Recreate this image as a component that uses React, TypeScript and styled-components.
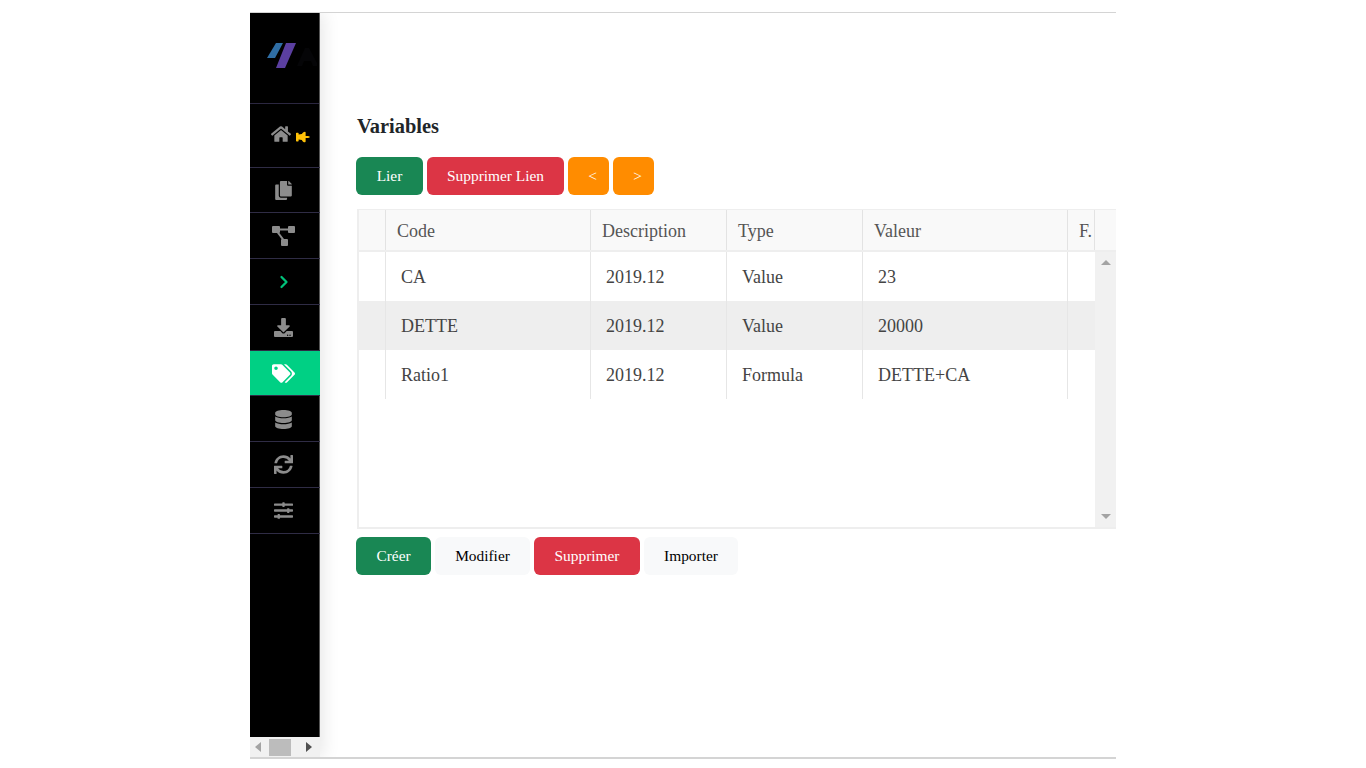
import React from "react"
import styled, { createGlobalStyle } from "styled-components"
import { FaHome, FaThumbtack, FaCopy, FaDownload, FaTags, FaDatabase, FaSlidersH, FaSync } from "react-icons/fa"
import { LuChevronRight } from "react-icons/lu"

const GlobalStyle = createGlobalStyle`
  html, body {
    margin: 0;
    padding: 0;
    background: #fff;
    font-family: "Liberation Serif", "Times New Roman", serif;
  }
`

const Page = styled.div`
  width: 1366px;
  height: 768px;
  overflow: hidden;
  display: flex;
  justify-content: center;
  padding-top: 12px;
  box-sizing: border-box;
`

const Frame = styled.div`
  width: 866px;
  height: 747px;
  box-sizing: border-box;
  border-top: 1px solid #d4d4d4;
  border-bottom: 2px solid #d4d4d4;
  display: flex;
  overflow: hidden;
`

const SideColumn = styled.div`
  width: 70px;
  flex: none;
  display: flex;
  flex-direction: column;
  box-shadow: 4px 0 16px rgba(0, 0, 0, 0.09);
  z-index: 1;
`

const Sidebar = styled.nav`
  flex: 1;
  background: #000;
  display: flex;
  flex-direction: column;
  border-right: 1px solid #555;
`

const LogoBox = styled.div`
  height: 91px;
  flex: none;
  display: flex;
  align-items: center;
  box-sizing: border-box;
  padding: 0 0 6px 17px;
  border-bottom: 1px solid #2b2740;
`

const NavItem = styled.div<{ $active?: boolean; $h?: number; $accent?: boolean }>`
  height: ${(props) => props.$h ?? 45.75}px;
  flex: none;
  display: flex;
  align-items: center;
  justify-content: center;
  box-sizing: border-box;
  padding: 1px 3px 0 0;
  color: ${(props) => (props.$active ? "#fff" : props.$accent ? "#00c27a" : "#8c8c8c")};
  background: ${(props) => (props.$active ? "#00d084" : "transparent")};
  border-bottom: 1px solid #2f2c45;
  margin-right: -1px;
  font-size: 19px;
`

const HomeRow = styled.div`
  display: flex;
  align-items: center;
  gap: 5px;
  padding: 0 0 3px 14px;
  font-size: 20px;
`

const Pin = styled(FaThumbtack)`
  color: #ffc107;
  font-size: 14px;
  transform: rotate(-90deg);
  margin-top: 5px;
`

const HScroll = styled.div`
  height: 20px;
  flex: none;
  background: #f1f1f1;
  display: flex;
  align-items: center;
  padding: 0 5px;
  gap: 8px;
`

const Arrow = styled.div<{ $dir: "left" | "right" | "up" | "down"; $dark?: boolean }>`
  width: 0;
  height: 0;
  border-style: solid;
  border-color: transparent;
  ${(props) => (props.$dir === "left" || props.$dir === "right" ? "border-width: 5px 0;" : "border-width: 0 5px;")}
  ${(props) => `border-${{ left: "right", right: "left", up: "bottom", down: "top" }[props.$dir]}: ${props.$dir === "left" || props.$dir === "right" ? 6 : 5}px solid ${props.$dark ? "#505050" : "#a3a3a3"};`}
`

const RightArrow = styled(Arrow)`
  margin-left: 7px;
`

const HThumb = styled.div`
  width: 22px;
  height: 17px;
  background: #bcbcbc;
`

const Main = styled.main`
  flex: 1;
  min-width: 0;
  padding: 102px 0 0 36px;
  display: flex;
  flex-direction: column;
  overflow: hidden;
`

const Title = styled.h2`
  margin: 0 0 0 1px;
  font-size: 20.4px;
  line-height: 22px;
  font-weight: 700;
  color: #212529;
`

const Toolbar = styled.div<{ $mt: number }>`
  display: flex;
  gap: 4px;
  margin-top: ${(props) => props.$mt}px;
`

const colors = {
  green: { bg: "#198754", fg: "#fff" },
  red: { bg: "#dc3545", fg: "#fff" },
  orange: { bg: "#ff8c00", fg: "#fff" },
  light: { bg: "#f8f9fa", fg: "#000" },
}

const Button = styled.button<{ $kind: keyof typeof colors; $w: number }>`
  width: ${(props) => props.$w}px;
  height: 38px;
  border: none;
  border-radius: 6px;
  padding: 0 0 1px;
  font-family: inherit;
  font-size: 15.4px;
  background: ${(props) => colors[props.$kind].bg};
  color: ${(props) => colors[props.$kind].fg};
`

const StepButton = styled(Button)`
  padding-left: 8px;
`

const Table = styled.div`
  margin: 14px 0 0 1px;
  width: 760px;
  height: 320px;
  flex: none;
  box-sizing: border-box;
  border-top: 1px solid #eee;
  border-left: 2px solid #eee;
  border-bottom: 2px solid #eee;
  display: flex;
  flex-direction: column;
`

const gridColumns = "27px 205px 136px 136px 205px 27px"

const HeaderRow = styled.div`
  height: 42px;
  flex: none;
  box-sizing: border-box;
  background: #f9f9f9;
  border-bottom: 2px solid #eee;
  display: grid;
  grid-template-columns: ${gridColumns} 22px;
`

const HeadCell = styled.div`
  border-right: 1px solid #e3e3e3;
  padding: 2px 0 0 11px;
  display: flex;
  align-items: center;
  font-size: 18px;
  color: #555;
  overflow: hidden;
  white-space: nowrap;

  &:last-child {
    border-right: none;
  }
`

const Body = styled.div`
  flex: 1;
  min-height: 0;
  display: flex;
`

const Rows = styled.div`
  width: 736px;
  flex: none;
`

const Row = styled.div<{ $striped?: boolean }>`
  height: 49px;
  display: grid;
  grid-template-columns: ${gridColumns};
  background: ${(props) => (props.$striped ? "#eee" : "#fff")};
`

const Cell = styled.div`
  border-right: 1px solid #e6e6e6;
  padding: 1px 0 0 15px;
  display: flex;
  align-items: center;
  font-size: 18px;
  color: #444;
  white-space: nowrap;

  &:last-child {
    border-right: none;
  }
`

const VScroll = styled.div`
  width: 22px;
  flex: none;
  background: #f1f1f1;
  display: flex;
  flex-direction: column;
  justify-content: space-between;
  align-items: center;
  padding: 8px 1px 8px 0;
  box-sizing: border-box;
`

const rows = [
  { code: "CA", description: "2019.12", type: "Value", value: "23" },
  { code: "DETTE", description: "2019.12", type: "Value", value: "20000" },
  { code: "Ratio1", description: "2019.12", type: "Formula", value: "DETTE+CA" },
]

function Logo() {
  return (
    <svg width="50" height="25" viewBox="0 0 50 25">
      <polygon points="9,0 16,0 8,15 0,15" fill="#2f6ea5" />
      <polygon points="19,0 29,0 18,25 9,25" fill="#5b3fa0" />
      <polygon points="30,23 38,5 42,5 50,20 50,23 46,23 44,18 37,18 35,23" fill="#050507" />
    </svg>
  )
}

function DiagramIcon() {
  return (
    <svg width="23" height="20" viewBox="0 0 23 20" fill="currentColor">
      <rect x="0" y="0" width="8" height="7" rx="1" />
      <rect x="16" y="0" width="7" height="7" rx="1" />
      <rect x="9" y="13" width="7" height="7" rx="1" />
      <path d="M8 2.5h8v2H8zM5 7h2.4l4.6 6h-2.5z" />
    </svg>
  )
}

export default function App() {
  return (
    <Page>
      <GlobalStyle />
      <Frame>
        <SideColumn>
          <Sidebar>
            <LogoBox>
              <Logo />
            </LogoBox>
            <NavItem $h={63.5}>
              <HomeRow>
                <FaHome />
                <Pin />
              </HomeRow>
            </NavItem>
            <NavItem>
              <FaCopy />
            </NavItem>
            <NavItem>
              <DiagramIcon />
            </NavItem>
            <NavItem $accent>
              <LuChevronRight strokeWidth={2.75} size={20} />
            </NavItem>
            <NavItem>
              <FaDownload />
            </NavItem>
            <NavItem $active>
              <FaTags size={23} />
            </NavItem>
            <NavItem>
              <FaDatabase />
            </NavItem>
            <NavItem>
              <FaSync />
            </NavItem>
            <NavItem>
              <FaSlidersH />
            </NavItem>
          </Sidebar>
          <HScroll>
            <Arrow $dir="left" />
            <HThumb />
            <RightArrow $dir="right" $dark />
          </HScroll>
        </SideColumn>
        <Main>
          <Title>Variables</Title>
          <Toolbar $mt={20}>
            <Button $kind="green" $w={67}>Lier</Button>
            <Button $kind="red" $w={137}>Supprimer Lien</Button>
            <StepButton $kind="orange" $w={41}>&lt;</StepButton>
            <StepButton $kind="orange" $w={41}>&gt;</StepButton>
          </Toolbar>
          <Table>
            <HeaderRow>
              <HeadCell />
              <HeadCell>Code</HeadCell>
              <HeadCell>Description</HeadCell>
              <HeadCell>Type</HeadCell>
              <HeadCell>Valeur</HeadCell>
              <HeadCell>F.</HeadCell>
              <HeadCell />
            </HeaderRow>
            <Body>
              <Rows>
                {rows.map((row, i) => (
                  <Row key={row.code} $striped={i === 1}>
                    <Cell />
                    <Cell>{row.code}</Cell>
                    <Cell>{row.description}</Cell>
                    <Cell>{row.type}</Cell>
                    <Cell>{row.value}</Cell>
                    <Cell />
                  </Row>
                ))}
              </Rows>
              <VScroll>
                <Arrow $dir="up" />
                <Arrow $dir="down" />
              </VScroll>
            </Body>
          </Table>
          <Toolbar $mt={8}>
            <Button $kind="green" $w={75}>Créer</Button>
            <Button $kind="light" $w={95}>Modifier</Button>
            <Button $kind="red" $w={106}>Supprimer</Button>
            <Button $kind="light" $w={94}>Importer</Button>
          </Toolbar>
        </Main>
      </Frame>
    </Page>
  )
}
